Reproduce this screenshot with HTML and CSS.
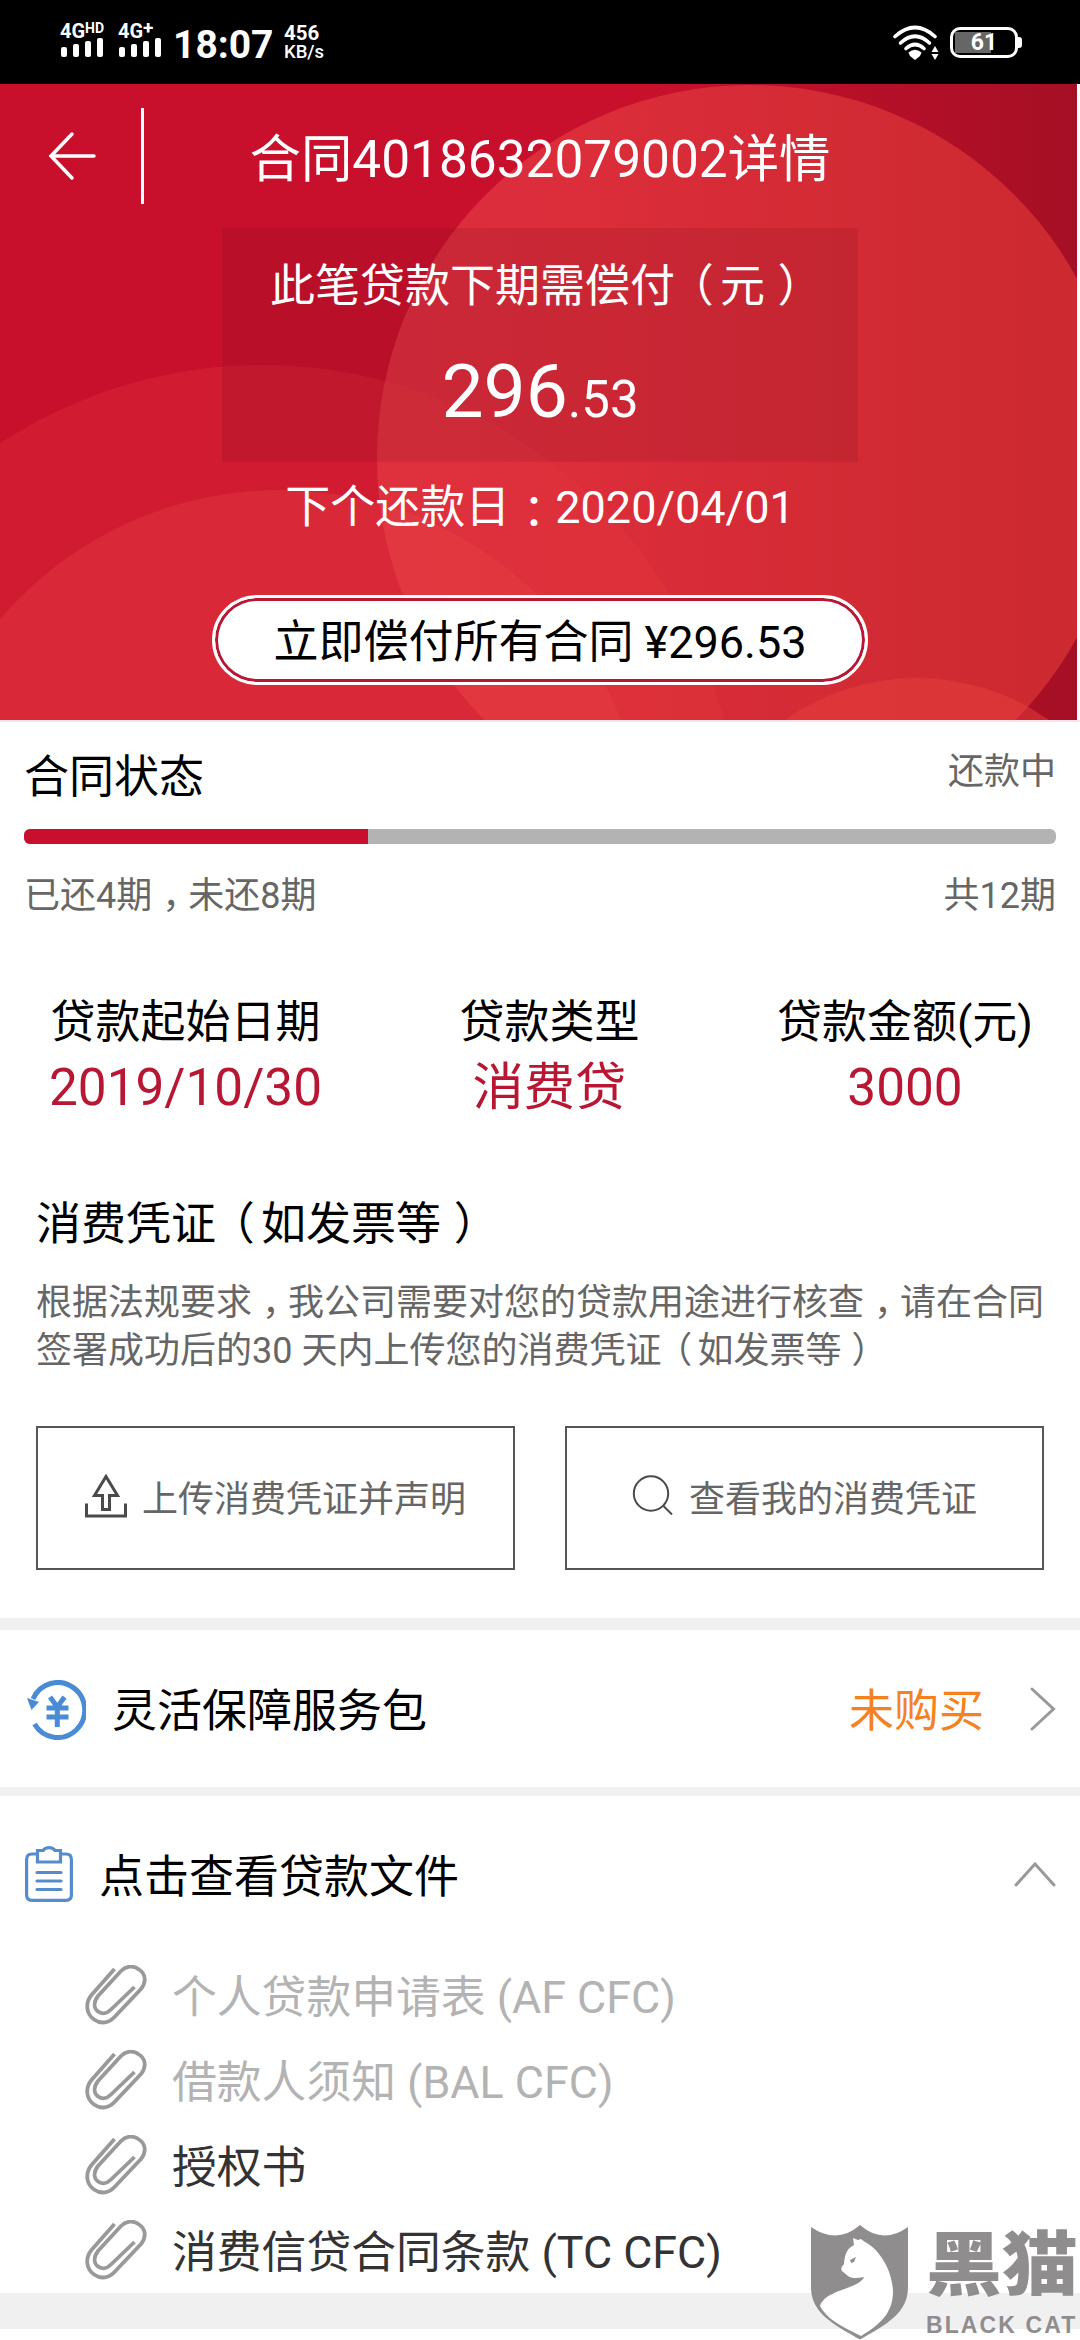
FILE: index.html
```html
<!DOCTYPE html>
<html lang="zh-CN">
<head>
<meta charset="utf-8">
<title>合同详情</title>
<link rel="stylesheet" href="styles.css">
</head>
<body>
<div class="status-bar">
  <div class="sim"><span class="net">4G<sup>HD</sup></span><span class="bars"><i></i><i></i><i></i><i></i></span></div>
  <div class="sim"><span class="net">4G<sup class="plus">+</sup></span><span class="bars"><i></i><i></i><i></i><i></i></span></div>
  <span class="clock">18:07</span>
  <div class="speed"><span>456</span><span class="unit">KB/s</span></div>
  <svg class="wifi" viewBox="0 0 48 36" width="48" height="36">
    <g fill="none" stroke="#fff" stroke-width="3.6" stroke-linecap="round">
      <path d="M3 11.500Q23 -6.500 43 11.500"/><path d="M8.500 18Q23 4.500 37.500 18"/><path d="M14 23.500Q23 15.500 32 23.500"/>
    </g>
    <path fill="#fff" d="M16.500 27.500Q23 22 29.500 27.500L28 31L23 35L18 31Z"/>
    <path fill="#fff" d="M39.500 27L43 21L46.500 27ZM39.500 29L43 35L46.500 29Z"/>
  </svg>
  <div class="battery"><span>61</span></div>
</div>

<header class="hero">
  <svg class="hero-bg" viewBox="0 84 1077 636" width="1077" height="636">
    <defs>
      <linearGradient id="base" gradientUnits="userSpaceOnUse" x1="0" y1="0" x2="1077" y2="0">
        <stop offset="0" stop-color="#c8102c"/><stop offset=".6" stop-color="#c8102c"/><stop offset="1" stop-color="#a50f25"/>
      </linearGradient>
      <linearGradient id="disc" gradientUnits="userSpaceOnUse" x1="377" y1="0" x2="1077" y2="0">
        <stop offset="0" stop-color="#db2e3e"/><stop offset=".3" stop-color="#db2d3a"/><stop offset="1" stop-color="#cc2930"/>
      </linearGradient>
    </defs>
    <rect y="84" width="1077" height="636" fill="url(#base)"/>
    <circle cx="750" cy="458" r="373" fill="url(#disc)"/>
    <circle cx="262" cy="843" r="478" fill="#e83a40" fill-opacity=".27"/>
    <circle cx="280" cy="858" r="368" fill="#ea4246" fill-opacity=".36"/>
    <circle cx="917" cy="906" r="228" fill="#e8403c" fill-opacity=".5"/>
  </svg>
  <div class="title-bar">
    <svg class="back" viewBox="0 0 48 50" width="48" height="50"><path d="M24 3L3 25L24 47M3 25H46"/></svg>
    <span class="title-rule"></span>
    <h1>合同4018632079002详情</h1>
  </div>
  <div class="due">
    <p class="due-label">此笔贷款下期需偿付<span class="open">（</span>元<span class="close">）</span></p>
    <p class="due-sum">296<small>.53</small></p>
  </div>
  <p class="due-date">下个还款日<span class="close colon">：</span>2020/04/01</p>
  <button class="pay">立即偿付所有合同 ¥296.53</button>
</header>

<section class="progress">
  <div class="row"><h2>合同状态</h2><span class="state">还款中</span></div>
  <div class="track"><div class="fill" style="width:33.333%"></div></div>
  <div class="row counts"><span>已还4期<span class="close">，</span>未还8期</span><span>共12期</span></div>
</section>

<section class="facts">
  <dl><dt>贷款起始日期</dt><dd>2019/10/30</dd></dl>
  <dl><dt>贷款类型</dt><dd>消费贷</dd></dl>
  <dl><dt>贷款金额(元)</dt><dd>3000</dd></dl>
</section>

<section class="voucher">
  <h2>消费凭证<span class="open">（</span>如发票等<span class="close">）</span></h2>
  <p>根据法规要求<span class="close">，</span>我公司需要对您的贷款用途进行核查<span class="close">，</span>请在合同<br>签署成功后的30 天内上传您的消费凭证<span class="open">（</span>如发票等<span class="close">）</span></p>
  <div class="actions">
    <button>
      <svg viewBox="0 0 42 44" width="42" height="44"><path d="M1.500 29.500V42H40.500V29.500M17.500 35.500V21.500H9.500L21 2.500L32.500 21.500H24.500V35.500Z"/></svg>
      <span>上传消费凭证并声明</span>
    </button>
    <button>
      <svg class="thin" viewBox="0 0 42 44" width="42" height="44"><circle cx="19" cy="19.500" r="17.200"/><path d="M31 31.500L40 40.500"/></svg>
      <span>查看我的消费凭证</span>
    </button>
  </div>
</section>

<section class="line service">
  <svg viewBox="0 0 60 60" width="60" height="60">
    <path d="M7 19A27 27.500 0 1 1 8.500 44" fill="none" stroke="#4a8bd6" stroke-width="5"/>
    <path d="M1 18L13 22L5.500 30Z" fill="#4a8bd6"/>
    <path d="M24 17L31.300 27L38.500 17M20.500 28H42.500M20.500 37H42.500M31.300 27V47" fill="none" stroke="#4a8bd6" stroke-width="5"/>
  </svg>
  <h3>灵活保障服务包</h3>
  <span class="unbought">未购买</span>
  <svg class="chevron" viewBox="0 0 26 44" width="26" height="44"><path d="M2 2L23.500 22L2 42"/></svg>
</section>

<section class="files">
  <div class="line files-head">
    <svg viewBox="0 0 48 56" width="48" height="56" fill="none" stroke="#568ccb" stroke-width="3.2" stroke-linecap="round" stroke-linejoin="round">
      <path d="M12 8H7Q1.600 8 1.600 13.500V49Q1.600 54.400 7 54.400H41Q46.400 54.400 46.400 49V13.500Q46.400 8 41 8H36"/>
      <path d="M12.500 16V4.500H18Q20 1.600 24 1.600T30 4.500H35.500V16Z" stroke-linejoin="miter"/>
      <path d="M12 26.500H36M12 35H36M12 43.500H36"/>
    </svg>
    <h3>点击查看贷款文件</h3>
    <svg class="chevron" viewBox="0 0 42 26" width="42" height="26"><path d="M2 24L21 3L40 24"/></svg>
  </div>
  <svg class="symbols" width="0" height="0"><symbol id="clip" viewBox="0 0 62 60"><path d="M29.500 4L6.500 30C0 38 1 49 9 54.500C16 59.500 24 58 29.500 52L56 24C61.500 17 61 9 54 4.500C48 0 41 1 36 6L13 31C8.500 37 8.500 43 13 46.500C17 49.500 22 48.500 26 44.500L49.500 22"/></symbol></svg>
  <ul>
    <li class="off"><svg class="clip" width="62" height="60"><use href="#clip"/></svg><span>个人贷款申请表 (AF CFC)</span></li>
    <li class="off"><svg class="clip" width="62" height="60"><use href="#clip"/></svg><span>借款人须知 (BAL CFC)</span></li>
    <li><svg class="clip" width="62" height="60"><use href="#clip"/></svg><span>授权书</span></li>
    <li><svg class="clip" width="62" height="60"><use href="#clip"/></svg><span>消费信贷合同条款 (TC CFC)</span></li>
  </ul>
</section>
<div class="bottom-band"></div>

<div class="watermark">
  <svg viewBox="0 0 98 115" width="98" height="115">
    <path fill="#8f8d8e" d="M0 2Q26 20 49 0Q72 20 97 2V62C97 88 76 99 49 114.500C22 99 0 88 0 62Z"/>
    <path fill="#fff" d="M42 13L47 15L50 14L54 17C69 25 81 45 82 66C82 86 72 98 50 111C29 101 15 93 9 81C13 69 30 66 41 61C48 58 51 56 53 52C47 53 41 54 37 51L31 46Q29 43 33 39C34 28 36 24 43 20Z"/>
    <path fill="#8f8d8e" d="M39 35L45 32L43 37L40 38Z"/>
  </svg>
  <div class="brand"><span class="brand-cn">黑猫</span><span class="brand-en">BLACK CAT</span></div>
</div>
</body>
</html>
```

FILE: styles.css
```css
* { box-sizing: border-box; margin: 0; padding: 0; }
body {
  position: relative;
  width: 1080px;
  height: 2340px;
  overflow: hidden;
  background: #fff;
  color: #000;
  font-family: Roboto, "Noto Sans CJK SC", sans-serif;
  font-size: 45px;
  line-height: 60px;
}
h1, h2, h3 { font-weight: 400; font-size: inherit; }
svg { flex: none; display: block; }
button { font: inherit; background: none; border: 0; white-space: nowrap; }

/* half-width punctuation padded out so that it sits in the middle of its cell */
.open, .close { font-feature-settings: "halt"; }
.open { padding: 0 .14em 0 .36em; }
.close { padding: 0 .22em 0 .28em; }
.colon { position: relative; top: 3px; }

/* status bar */
.status-bar {
  display: flex;
  align-items: flex-start;
  height: 84px;
  padding: 0 58px 0 60px;
  background: #000;
  color: #fff;
  font-weight: 700;
}
.sim { width: 58px; padding-top: 21px; }
.net { display: block; height: 18px; font-size: 20px; line-height: 19px; white-space: nowrap; }
.net sup { display: inline-block; font-size: 14px; line-height: 14px; vertical-align: 5px; }
.net .plus { font-size: 19px; vertical-align: 4px; }
.bars { display: flex; align-items: flex-end; gap: 6px; height: 18px; padding-left: 1px; }
.bars i { width: 6px; height: 10px; border-radius: 2px; background: #fff; }
.bars i:nth-child(2) { height: 13px; }
.bars i:nth-child(3) { height: 16px; }
.bars i:nth-child(4) { height: 19px; }
.clock { width: 111px; margin-left: -3px; padding-top: 17px; font-size: 39px; line-height: 56px; white-space: nowrap; }
.speed { display: flex; flex-direction: column; padding-top: 24px; font-size: 20.500px; line-height: 19px; }
.speed .unit { font-size: 18.500px; font-weight: 500; }
.wifi { margin: 25px 10px 0 auto; }
.battery {
  position: relative;
  width: 68px;
  height: 31px;
  margin: 27px 4px 0 0;
  border: 3px solid #fff;
  border-radius: 10px;
  background: linear-gradient(90deg, #666 0 36px, #000 36px) 2px 2px / 58px 21px no-repeat;
  font-size: 23px;
  line-height: 25px;
  text-align: center;
}
.battery::after {
  content: "";
  position: absolute;
  left: 65px;
  top: 7px;
  width: 4px;
  height: 11px;
  border-radius: 0 3px 3px 0;
  background: #fff;
}

/* red header */
.hero {
  position: relative;
  display: flex;
  flex-direction: column;
  align-items: center;
  height: 636px;
  color: #fff;
}
.hero > * { position: relative; }
.hero .hero-bg { position: absolute; left: 0; top: 0; }
.title-bar { display: grid; grid-template-columns: 141px 3px 1fr 144px; align-items: center; width: 1080px; height: 144px; }
.back { margin-left: 48px; fill: none; stroke: #fff; stroke-width: 3.500; stroke-linecap: round; }
.title-rule { height: 96px; background: #fff; }
.title-bar h1 { padding-top: 7px; font-size: 51.400px; text-align: center; }
.due { width: 636px; height: 234px; padding-top: 29px; background: rgba(120, 10, 30, .16); text-align: center; }
.due-sum { margin-top: 41px; font-size: 75px; line-height: 66px; }
.due-sum small { font-size: 51px; }
.due-date { margin-top: 16px; }
.pay {
  width: 656px;
  height: 90px;
  margin-top: 57px;
  padding-top: 5px;
  border: 3px solid #fff;
  border-radius: 45px;
  background: #fff;
  box-shadow: inset 0 0 0 3px #b81733;
  color: #000;
}

/* contract status */
.progress { height: 246px; padding: 26px 24px 0; border-top: 2px solid #fde4e6; }
.row { display: flex; justify-content: space-between; }
.state, .counts { color: #666; font-size: 36px; }
.state { line-height: 49px; }
.track { height: 15px; margin-top: 21px; border-radius: 6px; background: #b3b3b3; overflow: hidden; }
.fill { height: 15px; background: #c8102e; }
.counts { padding-top: 22px; }

.facts { display: flex; justify-content: space-between; height: 222px; padding: 27px 47px 0 49px; text-align: center; }
.facts dd { margin-top: 5px; color: #b81733; font-size: 51.300px; }

/* purchase voucher */
.voucher { height: 430px; padding: 7px 36px 0; }
.voucher p { margin-top: 24px; color: #666; font-size: 36px; line-height: 48px; white-space: nowrap; }
.actions { display: grid; grid-template-columns: 479px 479px; justify-content: space-between; margin-top: 51px; }
.actions button {
  display: flex;
  align-items: center;
  justify-content: center;
  gap: 15px;
  height: 144px;
  border: 2px solid #555;
  color: #666;
  font-size: 36px;
}
.actions span { padding-top: 4px; }
.actions svg { fill: none; stroke: #4a4a4a; stroke-width: 3; margin-bottom: 4px; }
.actions .thin { stroke-width: 2; }

.line { display: flex; align-items: center; }
.service { height: 178px; padding: 3px 24px 0 26px; border: solid #f0f0f0; border-width: 12px 0 9px; }
.service h3 { margin-left: 26px; padding-top: 4px; }
.unbought { margin-left: auto; margin-right: 46px; padding-top: 4px; color: #f58220; }
.chevron { fill: none; stroke: #999; stroke-width: 3; stroke-linecap: round; }
.service .chevron { margin-bottom: 2px; }

/* loan files */
.files { height: 497px; padding: 41px 24px 0 25px; }
.files-head { height: 74px; }
.files-head h3 { margin-left: 26px; padding-top: 7px; }
.files-head .chevron { margin-left: auto; }
.symbols { position: absolute; }
.files ul { padding-top: 41px; list-style: none; }
.files li { display: flex; align-items: center; height: 85px; padding-left: 60px; color: #333; font-size: 44.800px; white-space: nowrap; }
.files li span { padding-top: 6px; }
.files .off { color: #b3b3b3; }
.clip { margin-right: 25px; fill: none; stroke: #999; stroke-width: 3.800; }
.bottom-band { height: 36px; background: #f0f0f0; }

/* brand mark laid over the page corner */
.watermark { position: absolute; left: 811px; top: 2225px; display: flex; gap: 17px; color: #8f8d8e; }
.brand { display: flex; flex-direction: column; width: 153px; }
.brand-cn { height: 70px; font: 900 76px/70px "Noto Sans CJK SC", sans-serif; transform: scaleY(.92); }
.brand-en { margin-top: 17px; font: 700 23px/26px "Liberation Sans", sans-serif; letter-spacing: 2.100px; white-space: nowrap; }
```
